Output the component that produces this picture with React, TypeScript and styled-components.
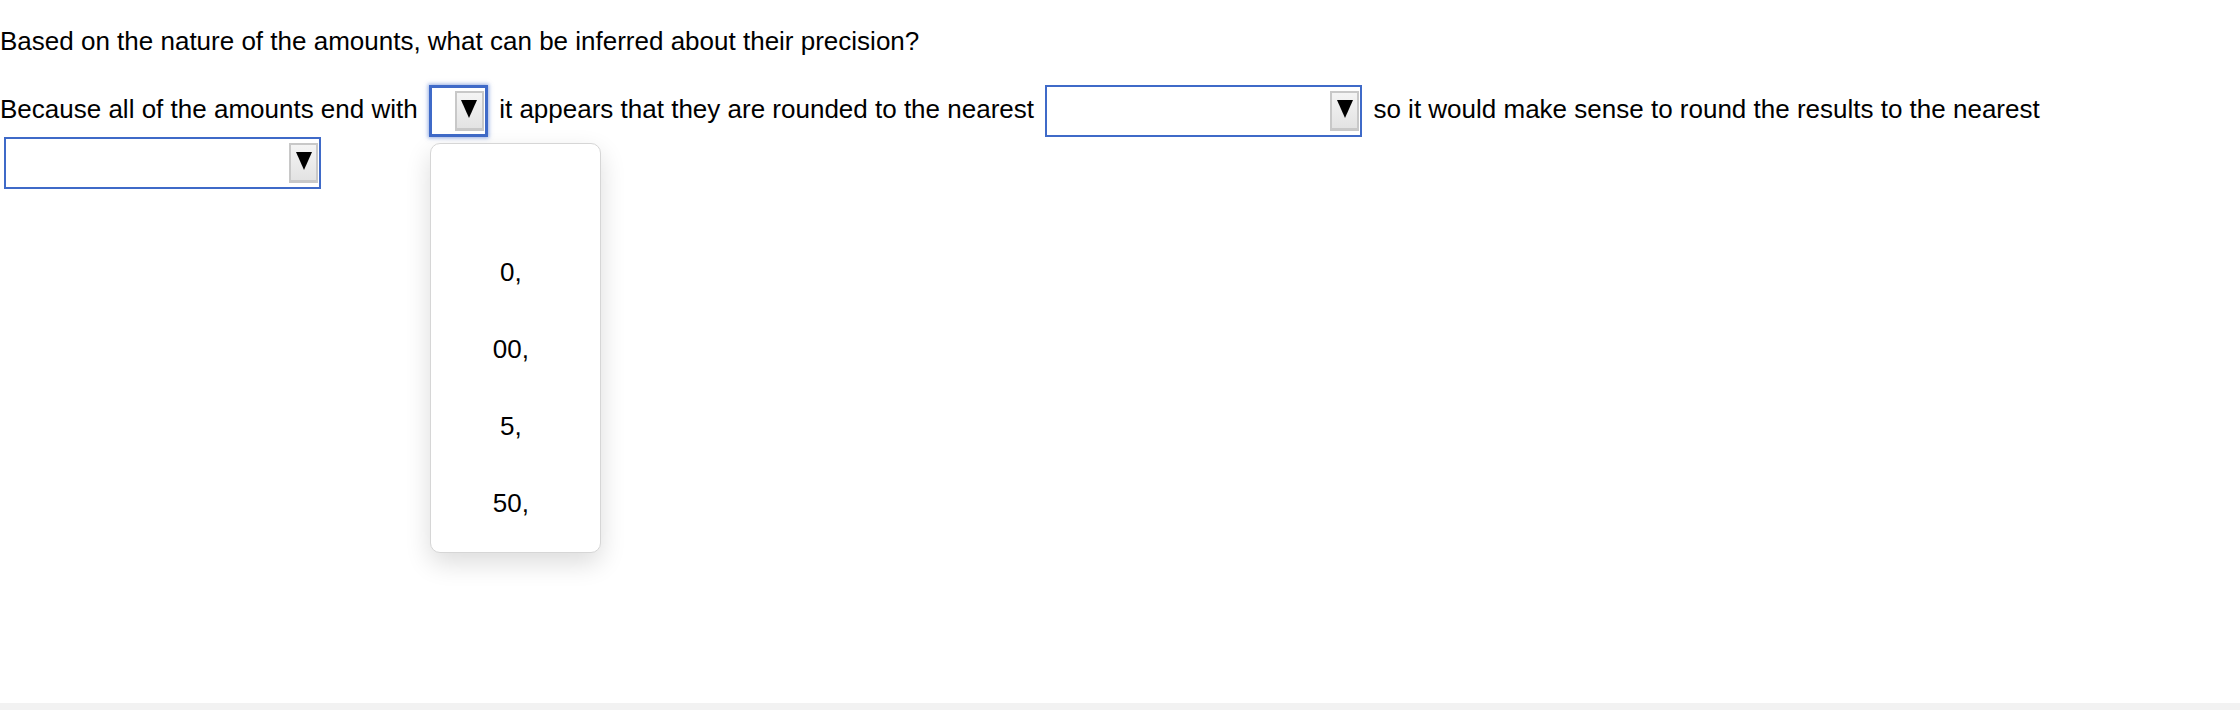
import styled, { createGlobalStyle } from "styled-components";

const GlobalStyle = createGlobalStyle`
  html, body {
    margin: 0;
    padding: 0;
    background: #fff;
  }
  body {
    font-family: "Liberation Sans", Arial, Helvetica, sans-serif;
    color: #000;
  }
`;

const options = ["", "0,", "00,", "5,", "50,"];

const Triangle = () => (
  <svg width="16" height="18" viewBox="0 0 16 18">
    <polygon points="0,0 16,0 8,18" fill="#000" />
  </svg>
);

const Dropdown = ({
  width,
  focused,
  open,
}: {
  width: number;
  focused?: boolean;
  open?: boolean;
}) => (
  <Select $width={width} $focused={focused}>
    <ArrowButton>
      <Triangle />
    </ArrowButton>
    {open && (
      <Menu>
        {options.map((o, i) => (
          <Option key={i}>{o}</Option>
        ))}
      </Menu>
    )}
  </Select>
);

const App = () => {
  return (
    <Page>
      <GlobalStyle />
      <Content>
        <Question>
          Based on the nature of the amounts, what can be inferred about their
          precision?
        </Question>
        <Answer>
          Because all of the amounts end with <Dropdown width={59} focused open />{" "}
          it appears that they are rounded to the nearest <Dropdown width={317} />{" "}
          so it would make sense to round the results to the nearest{" "}
          <Dropdown width={317} />
        </Answer>
      </Content>
      <Footer />
    </Page>
  );
};

const Page = styled.div`
  display: flex;
  flex-direction: column;
  height: 100vh;
  overflow: hidden;
`;

const Content = styled.main`
  flex: 1;
  padding-top: 26px;
  font-size: 26px;
`;

const Question = styled.p`
  margin: 0;
  line-height: 30px;
`;

const Answer = styled.p`
  margin: 29px 0 0;
  line-height: 30px;
`;

const Select = styled.span<{ $width: number; $focused?: boolean }>`
  position: relative;
  display: inline-flex;
  justify-content: flex-end;
  align-items: center;
  vertical-align: middle;
  box-sizing: border-box;
  width: ${(p) => p.$width}px;
  height: 52px;
  margin: 0 4px;
  padding-right: 1px;
  background: #fff;
  border: ${(p) => (p.$focused ? 3 : 2)}px solid #3f6ac8;
  box-shadow: ${(p) =>
    p.$focused ? "0 0 4px 1px rgba(63, 106, 200, 0.55)" : "none"};
`;

const ArrowButton = styled.span`
  display: flex;
  align-items: center;
  justify-content: center;
  box-sizing: border-box;
  width: 29px;
  height: 40px;
  padding-bottom: 3px;
  border: 2px solid #c8c8c8;
  border-bottom-width: 3px;
  background: linear-gradient(#f4f4f4, #e3e3e3);
`;

const Menu = styled.ul`
  position: absolute;
  top: 55px;
  left: -2px;
  z-index: 2;
  box-sizing: border-box;
  width: 171px;
  margin: 0;
  padding: 13px 9px 10px 0;
  list-style: none;
  background: #fff;
  border: 1px solid #d6d6d6;
  border-radius: 10px;
  box-shadow: 0 10px 26px rgba(0, 0, 0, 0.14);
`;

const Option = styled.li`
  height: 77px;
  line-height: 77px;
  text-align: center;
`;

const Footer = styled.div`
  height: 7px;
  flex-shrink: 0;
  background: #f2f2f2;
`;

export default App;
